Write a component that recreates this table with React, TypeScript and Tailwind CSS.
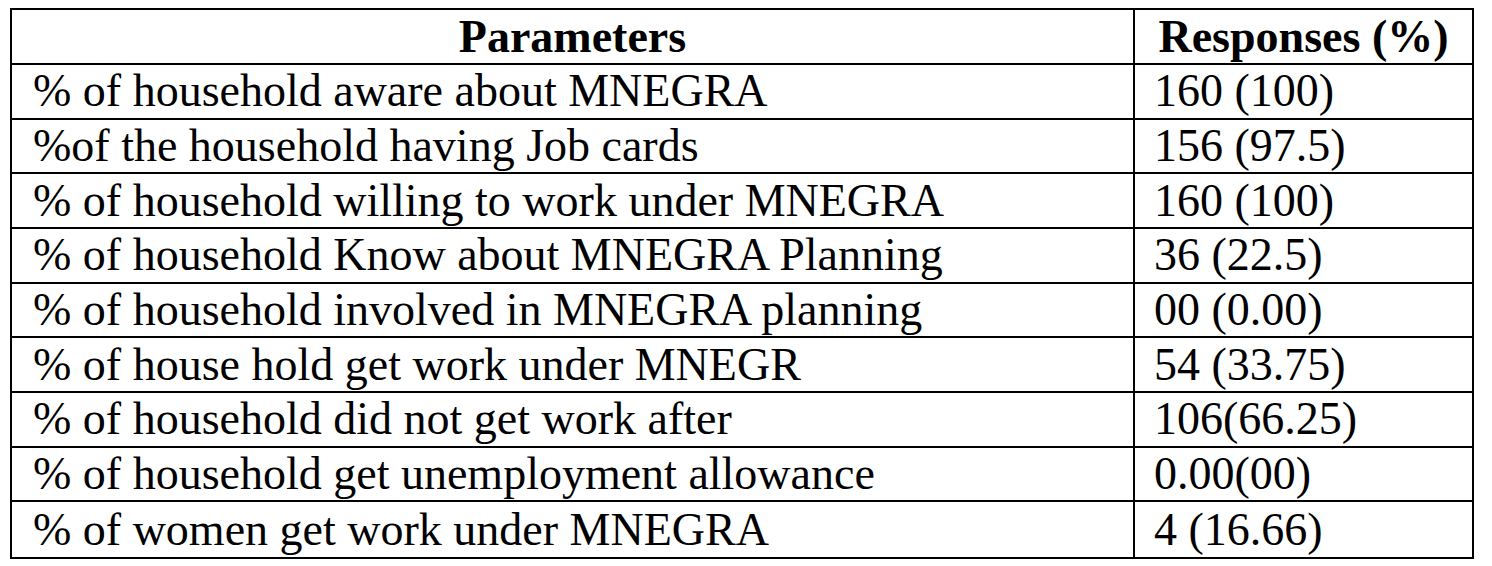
import React from 'react';

const rows: [string, string][] = [
  ['% of household aware about MNEGRA', '160 (100)'],
  ['%of the household having Job cards', '156 (97.5)'],
  ['% of household willing to work under MNEGRA', '160 (100)'],
  ['% of household Know about MNEGRA Planning', '36 (22.5)'],
  ['% of household involved in MNEGRA planning', '00 (0.00)'],
  ['% of house hold get work under MNEGR', '54 (33.75)'],
  ['% of household did not get work after', '106(66.25)'],
  ['% of household get unemployment allowance', '0.00(00)'],
  ['% of women get work under MNEGRA', '4 (16.66)'],
];

export default function App() {
  return (
    <div className="w-[1492px] h-[566px] bg-white pt-[8px] pl-[10px] text-black font-['Liberation_Serif','Times_New_Roman',serif] text-[46px] leading-none">
      <div className="w-[1464px] border-2 border-black">
        <div className="flex h-[55px] border-b-2 border-black font-bold">
          <div className="w-[1123px] border-r-2 border-black flex items-center justify-center">Parameters</div>
          <div className="flex-1 flex items-center justify-center">Responses (%)</div>
        </div>
        {rows.map(([param, resp], i) => (
          <div
            key={i}
            className={`flex h-[54.67px] border-black ${i < rows.length - 1 ? 'border-b-2' : ''}`}
          >
            <div className="w-[1123px] border-r-2 border-black flex items-center pl-[21px]">{param}</div>
            <div className="flex-1 flex items-center pl-[19px]">{resp}</div>
          </div>
        ))}
      </div>
    </div>
  );
}
